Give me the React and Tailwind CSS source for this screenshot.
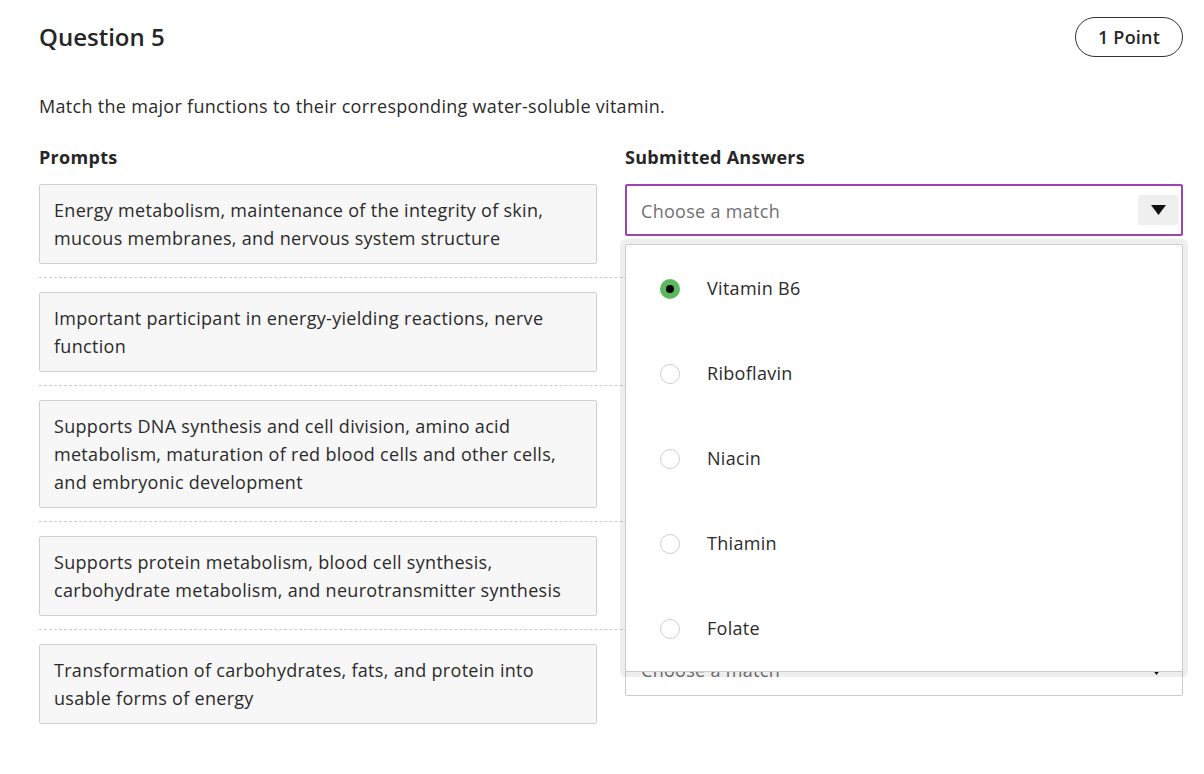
import React from "react";

const prompts = [
  "Energy metabolism, maintenance of the integrity of skin, mucous membranes, and nervous system structure",
  "Important participant in energy-yielding reactions, nerve function",
  "Supports DNA synthesis and cell division, amino acid metabolism, maturation of red blood cells and other cells, and embryonic development",
  "Supports protein metabolism, blood cell synthesis, carbohydrate metabolism, and neurotransmitter synthesis",
  "Transformation of carbohydrates, fats, and protein into usable forms of energy",
];

const options = ["Vitamin B6", "Riboflavin", "Niacin", "Thiamin", "Folate"];

function Triangle() {
  return (
    <svg width="15" height="10" viewBox="0 0 15 10" aria-hidden="true">
      <path d="M0 0 L15 0 L7.5 10 Z" fill="#111" />
    </svg>
  );
}

function Select({ focused }) {
  if (focused) {
    return (
      <div className="h-[52px] w-full flex items-center justify-between border-2 border-[#9d44b5] rounded-[2px] bg-white pl-[14px] pr-[3px]">
        <span className="text-[18px] tracking-[0.3px] text-[#707070] pt-[2px]">Choose a match</span>
        <span className="w-[40px] h-[30px] bg-[#efefef] rounded-[2px] flex items-center justify-center">
          <Triangle />
        </span>
      </div>
    );
  }
  return (
    <div className="h-[52px] w-full flex items-center justify-between border border-[#cccccc] rounded-[2px] bg-white pl-[15px] pr-[18px]">
      <span className="text-[18px] tracking-[0.3px] text-[#707070]">Choose a match</span>
      <Triangle />
    </div>
  );
}

function Dropdown() {
  return (
    <div className="absolute left-0 right-0 top-[60px] z-10 h-[428px] bg-white border border-[#cccccc] rounded-[2px] shadow-[0_0_0_5px_rgba(0,0,0,0.065)] flex flex-col pt-[1px]">
      {options.map((o, i) => (
        <div key={o} className="flex-1 flex items-center pl-[34px]">
          {i === 0 ? (
            <span className="w-[20px] h-[20px] rounded-full bg-[#5cb85c] flex items-center justify-center">
              <span className="w-[8px] h-[8px] rounded-full bg-black" />
            </span>
          ) : (
            <span className="w-[20px] h-[20px] rounded-full border border-[#cfcfcf] bg-white" />
          )}
          <span className="ml-[27px] text-[18px] tracking-[0.3px] text-[#2b2b2b]">{o}</span>
        </div>
      ))}
    </div>
  );
}

export default function App() {
  return (
    <div
      className="min-h-[774px] bg-white text-[#333333] pl-[39px] pr-[21px] pt-[17px]"
      style={{ fontFamily: '"Open Sans", "Noto Sans", sans-serif' }}
    >
      <div className="flex items-center justify-between h-[40px]">
        <h1 className="text-[24px] leading-[32px] font-semibold text-[#262626]">Question 5</h1>
        <div className="h-[40px] w-[108px] rounded-full border border-[#333333] flex items-center justify-center text-[18px] font-semibold tracking-[0.2px] text-[#262626]">
          1 Point
        </div>
      </div>

      <p className="mt-[35px] text-[18px] leading-[28px] tracking-[0.3px] text-[#2b2b2b]">
        Match the major functions to their corresponding water-soluble vitamin.
      </p>

      <div className="mt-[23px] flex gap-[28px]">
        <div className="w-[558px] text-[18px] leading-[28px] font-bold tracking-[0.3px] text-[#262626]">Prompts</div>
        <div className="flex-1 text-[18px] leading-[28px] font-bold tracking-[0.3px] text-[#262626]">Submitted Answers</div>
      </div>

      <div className="mt-[13px]">
        {prompts.map((p, i) => (
          <div
            key={i}
            className={
              i < prompts.length - 1
                ? "flex gap-[28px] items-start pb-[13px] mb-[14px] border-b border-dashed border-[#cccccc]"
                : "flex gap-[28px] items-start"
            }
          >
            <div className="w-[558px] shrink-0 bg-[#f7f7f7] border border-[#cfcfcf] rounded-[2px] px-[14px] py-[11px] text-[18px] leading-[28px] tracking-[0.3px] text-[#2b2b2b]">
              {p}
            </div>
            <div className="flex-1 relative">
              <Select focused={i === 0} />
              {i === 0 && <Dropdown />}
            </div>
          </div>
        ))}
      </div>
    </div>
  );
}
